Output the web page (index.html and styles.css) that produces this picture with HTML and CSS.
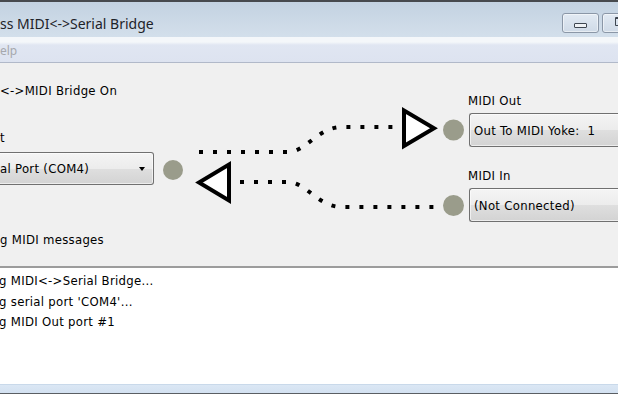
FILE: index.html
```html
<!DOCTYPE html>
<html>
<head>
<meta charset="utf-8">
<link rel="stylesheet" href="styles.css">
</head>
<body>
<div class="window">
  <div class="titlebar">
    <span class="title">ss MIDI&lt;-&gt;Serial Bridge</span>
    <div class="caption-btns">
      <div class="cbtn cbtn-min"><span class="min-glyph"></span></div>
      <div class="cbtn cbtn-max"><span class="max-glyph"></span></div>
    </div>
  </div>
  <div class="menubar"><span class="menu-item">elp</span></div>
  <div class="main">
    <div class="left">
      <div class="text-line bridge-on">&lt;-&gt;MIDI Bridge On</div>
      <div class="text-line serial-label">t</div>
      <div class="combo combo-left">
        <span class="combo-text">al Port (COM4)</span>
        <span class="combo-arrow"></span>
      </div>
      <div class="text-line debug">g MIDI messages</div>
    </div>
    <svg class="diagram" width="312" height="203" viewBox="156 63 312 203">
      <circle cx="173" cy="170" r="10" fill="#9a9c8b"/>
      <circle cx="453.5" cy="130" r="10.5" fill="#9a9c8b"/>
      <circle cx="453.5" cy="205.5" r="10.5" fill="#9a9c8b"/>
      <path d="M199 152 H288 C306 152 318 127 342 127 H398" fill="none" stroke="#000" stroke-width="4" stroke-dasharray="4 10"/>
      <path d="M240 182 H288 C306 182 318 207 342 207 H436" fill="none" stroke="#000" stroke-width="4" stroke-dasharray="4 10"/>
      <polygon points="404,110.5 404,146 434,128.2" fill="#fff" stroke="#000" stroke-width="4"/>
      <polygon points="229,164.5 229,200.5 199,182.5" fill="#fff" stroke="#000" stroke-width="4"/>
    </svg>
    <div class="right">
      <div class="text-line midi-out-label">MIDI Out</div>
      <div class="combo combo-right"><span class="combo-text">Out To MIDI Yoke:&nbsp; 1</span></div>
      <div class="text-line midi-in-label">MIDI In</div>
      <div class="combo combo-right"><span class="combo-text">(Not Connected)</span></div>
    </div>
  </div>
  <div class="log">
    <div class="log-line">g MIDI&lt;-&gt;Serial Bridge...</div>
    <div class="log-line">g serial port 'COM4'...</div>
    <div class="log-line">g MIDI Out port #1</div>
  </div>
  <div class="frame-bottom"></div>
</div>
</body>
</html>
```

FILE: styles.css
```css
html, body {
  margin: 0;
  padding: 0;
  width: 618px;
  height: 394px;
  overflow: hidden;
  background: #f0f0f0;
}

.window {
  width: 618px;
  height: 394px;
  display: flex;
  flex-direction: column;
  font-family: "DejaVu Sans Condensed", "DejaVu Sans", sans-serif;
  font-size: 13px;
  letter-spacing: 0.3px;
  color: #000;
  overflow: hidden;
}

.titlebar {
  height: 35px;
  border-top: 2px solid #474a4e;
  background: linear-gradient(#c3d2e1, #d3dfeb);
  display: flex;
  justify-content: space-between;
  align-items: flex-start;
  flex-shrink: 0;
  letter-spacing: 0;
}

.title {
  font-family: "Noto Sans", "Open Sans", sans-serif;
  font-size: 14px;
  line-height: 20px;
  padding-top: 12px;
  color: #1e2329;
}

.caption-btns {
  display: flex;
  gap: 3px;
  margin-top: 11px;
  margin-right: -12px;
  flex-shrink: 0;
}

.cbtn {
  height: 18px;
  border: 1px solid #8b97a7;
  border-radius: 3px;
  background: linear-gradient(#e2eaf3, #cfdae7);
  box-shadow: inset 0 0 0 1px rgba(255,255,255,0.5);
  display: flex;
  align-items: center;
  justify-content: center;
  flex-shrink: 0;
}

.cbtn-min {
  width: 35px;
}

.cbtn-max {
  width: 26px;
  justify-content: flex-start;
}

.min-glyph {
  width: 11px;
  height: 3px;
  border: 1px solid #3e4650;
  border-radius: 1px;
  background: #eef1f4;
  margin-top: 5px;
}

.max-glyph {
  width: 8px;
  height: 6px;
  border: 1px solid #3e4650;
  border-top-width: 2px;
  border-radius: 1px;
  margin-left: 12px;
  margin-top: -3px;
}

.menubar {
  height: 25px;
  border-bottom: 1px solid #b1b9c9;
  background: linear-gradient(#f4f7fa 0, #f4f7fa 5px, #e0e6f2 8px, #dde3f0 100%);
  display: flex;
  align-items: flex-start;
  flex-shrink: 0;
  letter-spacing: 0;
}

.menu-item {
  font-family: "Noto Sans", "Open Sans", sans-serif;
  font-size: 12px;
  line-height: 16px;
  padding-top: 6px;
  color: #a6a8ad;
}

.main {
  height: 203px;
  background: #f0f0f0;
  display: flex;
  flex-shrink: 0;
}

.left {
  width: 156px;
  display: flex;
  flex-direction: column;
  flex-shrink: 0;
}

.text-line {
  line-height: 16px;
  height: 16px;
  white-space: nowrap;
}

.bridge-on {
  margin-top: 20px;
}

.serial-label {
  margin-top: 31px;
}

.combo {
  height: 31px;
  border: 1px solid #707070;
  border-radius: 3px;
  background: linear-gradient(#f4f4f4 0%, #ececec 50%, #dfdfdf 50%, #d3d3d3 100%);
  box-shadow: inset 0 0 0 1px rgba(255,255,255,0.6);
  display: flex;
  align-items: center;
  white-space: nowrap;
  overflow: hidden;
  flex-shrink: 0;
}

.combo-left {
  width: 155px;
  margin-top: 6px;
  margin-left: -2px;
  justify-content: space-between;
  border-left: none;
  border-top-left-radius: 0;
  border-bottom-left-radius: 0;
}

.combo-left .combo-text {
  margin-left: 2px;
}

.combo-arrow {
  width: 0;
  height: 0;
  border-left: 3.5px solid transparent;
  border-right: 3.5px solid transparent;
  border-top: 4px solid #000;
  margin-right: 8px;
  margin-top: 1px;
}

.debug {
  margin-top: 47px;
}

.diagram {
  display: block;
  flex-shrink: 0;
}

.right {
  display: flex;
  flex-direction: column;
  flex-shrink: 0;
  width: 180px;
}

.midi-out-label {
  margin-top: 30px;
}

.combo-right {
  width: 180px;
  height: 32px;
  margin-top: 4px;
  margin-left: 1px;
  border-right: none;
}

.combo-right .combo-text {
  margin-left: 4px;
}

.midi-in-label {
  margin-top: 21px;
}

.log {
  border-top: 2px solid #9c9c9c;
  background: #ffffff;
  padding-top: 3px;
  box-sizing: border-box;
  height: 118px;
  flex-shrink: 0;
}

.log-line {
  line-height: 20.6px;
  height: 20.6px;
  white-space: nowrap;
  margin-left: -1px;
}

.frame-bottom {
  height: 8px;
  background: linear-gradient(#dbe7f4, #d3e1f1);
  border-top: 1px solid #c9d9ea;
  border-bottom: 1px solid #5a5e63;
  flex-shrink: 0;
}
```
